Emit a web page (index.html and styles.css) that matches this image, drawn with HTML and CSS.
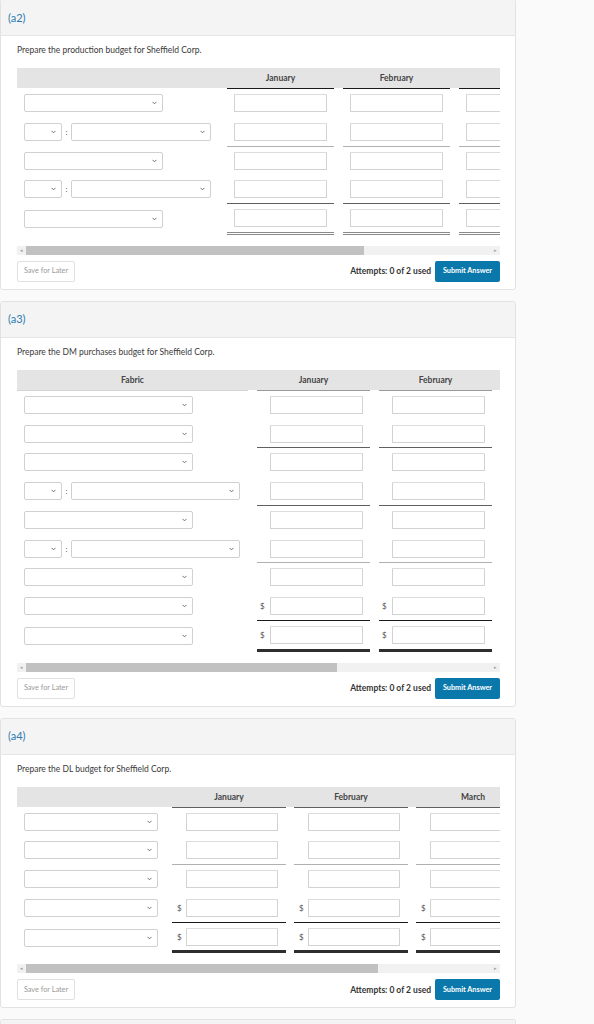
FILE: index.html
```html
<!DOCTYPE html>
<html lang="en">
<head>
<meta charset="utf-8">
<title>Budgets</title>
<link rel="stylesheet" href="styles.css">
</head>
<body>
<div class="page">

  <!-- (a2) -->
  <section class="card">
    <header class="card-head">(a2)</header>
    <div class="card-body">
      <p class="prompt">Prepare the production budget for Sheffield Corp.</p>
      <div class="viewport">
        <div class="row t-a2 hrow">
          <div class="hc"></div>
          <div class="hc ln-black">January</div>
          <div class="hc ln-black">February</div>
          <div class="hc ln-black"></div>
        </div>
        <div class="row t-a2">
          <div class="lc"><div class="sel w139"><svg class="chev" viewBox="0 0 6 4"><path d="M0.6 0.6L3 3L5.4 0.6"/></svg></div></div>
          <div class="mc"><input class="inp" type="text"></div>
          <div class="mc"><input class="inp" type="text"></div>
          <div class="mc"><input class="inp" type="text"></div>
        </div>
        <div class="row t-a2">
          <div class="lc"><div class="sel w38"><svg class="chev" viewBox="0 0 6 4"><path d="M0.6 0.6L3 3L5.4 0.6"/></svg></div><span class="colon">:</span><div class="sel w140"><svg class="chev" viewBox="0 0 6 4"><path d="M0.6 0.6L3 3L5.4 0.6"/></svg></div></div>
          <div class="mc ln-gray"><input class="inp" type="text"></div>
          <div class="mc ln-gray"><input class="inp" type="text"></div>
          <div class="mc ln-gray"><input class="inp" type="text"></div>
        </div>
        <div class="row t-a2">
          <div class="lc"><div class="sel w139"><svg class="chev" viewBox="0 0 6 4"><path d="M0.6 0.6L3 3L5.4 0.6"/></svg></div></div>
          <div class="mc"><input class="inp" type="text"></div>
          <div class="mc"><input class="inp" type="text"></div>
          <div class="mc"><input class="inp" type="text"></div>
        </div>
        <div class="row t-a2">
          <div class="lc"><div class="sel w38"><svg class="chev" viewBox="0 0 6 4"><path d="M0.6 0.6L3 3L5.4 0.6"/></svg></div><span class="colon">:</span><div class="sel w140"><svg class="chev" viewBox="0 0 6 4"><path d="M0.6 0.6L3 3L5.4 0.6"/></svg></div></div>
          <div class="mc ln-dark"><input class="inp" type="text"></div>
          <div class="mc ln-dark"><input class="inp" type="text"></div>
          <div class="mc ln-dark"><input class="inp" type="text"></div>
        </div>
        <div class="row t-a2">
          <div class="lc"><div class="sel w139"><svg class="chev" viewBox="0 0 6 4"><path d="M0.6 0.6L3 3L5.4 0.6"/></svg></div></div>
          <div class="mc ln-total-gray"><input class="inp" type="text"></div>
          <div class="mc ln-total-gray"><input class="inp" type="text"></div>
          <div class="mc ln-total-gray"><input class="inp" type="text"></div>
        </div>
      </div>
      <div class="hscroll">
        <span class="arr">&#9666;</span>
        <div class="track"><div class="thumb" style="width:338px"></div></div>
        <span class="arr">&#9656;</span>
      </div>
      <div class="actions">
        <button class="btn-save" type="button">Save for Later</button>
        <div class="submit-group">
          <span class="attempts">Attempts: 0 of 2 used</span>
          <button class="btn-submit" type="button">Submit Answer</button>
        </div>
      </div>
    </div>
  </section>

  <!-- (a3) -->
  <section class="card">
    <header class="card-head">(a3)</header>
    <div class="card-body">
      <p class="prompt">Prepare the DM purchases budget for Sheffield Corp.</p>
      <div class="viewport">
        <div class="row t-a3 hrow">
          <div class="hc ln-light">Fabric</div>
          <div class="hc ln-mid">January</div>
          <div class="hc ln-mid">February</div>
        </div>
        <div class="row t-a3">
          <div class="lc"><div class="sel w169"><svg class="chev" viewBox="0 0 6 4"><path d="M0.6 0.6L3 3L5.4 0.6"/></svg></div></div>
          <div class="mc"><span class="cur"></span><input class="inp" type="text"></div>
          <div class="mc"><span class="cur"></span><input class="inp" type="text"></div>
        </div>
        <div class="row t-a3">
          <div class="lc"><div class="sel w169"><svg class="chev" viewBox="0 0 6 4"><path d="M0.6 0.6L3 3L5.4 0.6"/></svg></div></div>
          <div class="mc ln-dark"><span class="cur"></span><input class="inp" type="text"></div>
          <div class="mc ln-dark"><span class="cur"></span><input class="inp" type="text"></div>
        </div>
        <div class="row t-a3">
          <div class="lc"><div class="sel w169"><svg class="chev" viewBox="0 0 6 4"><path d="M0.6 0.6L3 3L5.4 0.6"/></svg></div></div>
          <div class="mc"><span class="cur"></span><input class="inp" type="text"></div>
          <div class="mc"><span class="cur"></span><input class="inp" type="text"></div>
        </div>
        <div class="row t-a3">
          <div class="lc"><div class="sel w38"><svg class="chev" viewBox="0 0 6 4"><path d="M0.6 0.6L3 3L5.4 0.6"/></svg></div><span class="colon">:</span><div class="sel w169"><svg class="chev" viewBox="0 0 6 4"><path d="M0.6 0.6L3 3L5.4 0.6"/></svg></div></div>
          <div class="mc ln-dark"><span class="cur"></span><input class="inp" type="text"></div>
          <div class="mc ln-dark"><span class="cur"></span><input class="inp" type="text"></div>
        </div>
        <div class="row t-a3">
          <div class="lc"><div class="sel w169"><svg class="chev" viewBox="0 0 6 4"><path d="M0.6 0.6L3 3L5.4 0.6"/></svg></div></div>
          <div class="mc"><span class="cur"></span><input class="inp" type="text"></div>
          <div class="mc"><span class="cur"></span><input class="inp" type="text"></div>
        </div>
        <div class="row t-a3">
          <div class="lc"><div class="sel w38"><svg class="chev" viewBox="0 0 6 4"><path d="M0.6 0.6L3 3L5.4 0.6"/></svg></div><span class="colon">:</span><div class="sel w169"><svg class="chev" viewBox="0 0 6 4"><path d="M0.6 0.6L3 3L5.4 0.6"/></svg></div></div>
          <div class="mc ln-gray"><span class="cur"></span><input class="inp" type="text"></div>
          <div class="mc ln-gray"><span class="cur"></span><input class="inp" type="text"></div>
        </div>
        <div class="row t-a3">
          <div class="lc"><div class="sel w169"><svg class="chev" viewBox="0 0 6 4"><path d="M0.6 0.6L3 3L5.4 0.6"/></svg></div></div>
          <div class="mc"><span class="cur"></span><input class="inp" type="text"></div>
          <div class="mc"><span class="cur"></span><input class="inp" type="text"></div>
        </div>
        <div class="row t-a3">
          <div class="lc"><div class="sel w169"><svg class="chev" viewBox="0 0 6 4"><path d="M0.6 0.6L3 3L5.4 0.6"/></svg></div></div>
          <div class="mc ln-black"><span class="cur">$</span><input class="inp" type="text"></div>
          <div class="mc ln-black"><span class="cur">$</span><input class="inp" type="text"></div>
        </div>
        <div class="row t-a3">
          <div class="lc"><div class="sel w169"><svg class="chev" viewBox="0 0 6 4"><path d="M0.6 0.6L3 3L5.4 0.6"/></svg></div></div>
          <div class="mc ln-total"><span class="cur">$</span><input class="inp" type="text"></div>
          <div class="mc ln-total"><span class="cur">$</span><input class="inp" type="text"></div>
        </div>
      </div>
      <div class="hscroll">
        <span class="arr">&#9666;</span>
        <div class="track"><div class="thumb" style="width:311px"></div></div>
        <span class="arr">&#9656;</span>
      </div>
      <div class="actions">
        <button class="btn-save" type="button">Save for Later</button>
        <div class="submit-group">
          <span class="attempts">Attempts: 0 of 2 used</span>
          <button class="btn-submit" type="button">Submit Answer</button>
        </div>
      </div>
    </div>
  </section>

  <!-- (a4) -->
  <section class="card">
    <header class="card-head">(a4)</header>
    <div class="card-body">
      <p class="prompt">Prepare the DL budget for Sheffield Corp.</p>
      <div class="viewport">
        <div class="row t-a4 hrow">
          <div class="hc"></div>
          <div class="hc ln-dark">January</div>
          <div class="hc ln-dark">February</div>
          <div class="hc ln-dark">March</div>
        </div>
        <div class="row t-a4">
          <div class="lc"><div class="sel w134"><svg class="chev" viewBox="0 0 6 4"><path d="M0.6 0.6L3 3L5.4 0.6"/></svg></div></div>
          <div class="mc"><span class="cur"></span><input class="inp" type="text"></div>
          <div class="mc"><span class="cur"></span><input class="inp" type="text"></div>
          <div class="mc"><span class="cur"></span><input class="inp" type="text"></div>
        </div>
        <div class="row t-a4">
          <div class="lc"><div class="sel w134"><svg class="chev" viewBox="0 0 6 4"><path d="M0.6 0.6L3 3L5.4 0.6"/></svg></div></div>
          <div class="mc ln-gray"><span class="cur"></span><input class="inp" type="text"></div>
          <div class="mc ln-gray"><span class="cur"></span><input class="inp" type="text"></div>
          <div class="mc ln-gray"><span class="cur"></span><input class="inp" type="text"></div>
        </div>
        <div class="row t-a4">
          <div class="lc"><div class="sel w134"><svg class="chev" viewBox="0 0 6 4"><path d="M0.6 0.6L3 3L5.4 0.6"/></svg></div></div>
          <div class="mc"><span class="cur"></span><input class="inp" type="text"></div>
          <div class="mc"><span class="cur"></span><input class="inp" type="text"></div>
          <div class="mc"><span class="cur"></span><input class="inp" type="text"></div>
        </div>
        <div class="row t-a4">
          <div class="lc"><div class="sel w134"><svg class="chev" viewBox="0 0 6 4"><path d="M0.6 0.6L3 3L5.4 0.6"/></svg></div></div>
          <div class="mc ln-black"><span class="cur">$</span><input class="inp" type="text"></div>
          <div class="mc ln-black"><span class="cur">$</span><input class="inp" type="text"></div>
          <div class="mc ln-black"><span class="cur">$</span><input class="inp" type="text"></div>
        </div>
        <div class="row t-a4">
          <div class="lc"><div class="sel w134"><svg class="chev" viewBox="0 0 6 4"><path d="M0.6 0.6L3 3L5.4 0.6"/></svg></div></div>
          <div class="mc ln-total"><span class="cur">$</span><input class="inp" type="text"></div>
          <div class="mc ln-total"><span class="cur">$</span><input class="inp" type="text"></div>
          <div class="mc ln-total"><span class="cur">$</span><input class="inp" type="text"></div>
        </div>
      </div>
      <div class="hscroll">
        <span class="arr">&#9666;</span>
        <div class="track"><div class="thumb" style="width:352px"></div></div>
        <span class="arr">&#9656;</span>
      </div>
      <div class="actions">
        <button class="btn-save" type="button">Save for Later</button>
        <div class="submit-group">
          <span class="attempts">Attempts: 0 of 2 used</span>
          <button class="btn-submit" type="button">Submit Answer</button>
        </div>
      </div>
    </div>
  </section>

  <section class="card card-stub">
    <header class="card-head"></header>
  </section>

</div>
</body>
</html>
```

FILE: styles.css
```css
* { box-sizing: border-box; }

html, body {
  margin: 0;
  padding: 0;
  background: #fafafa;
  font-family: Lato, "Open Sans", "Liberation Sans", sans-serif;
  color: #333;
}

.page {
  display: flex;
  flex-direction: column;
  gap: 11px;
  width: 516px;
  margin-top: -1px;
}

.card {
  background: #fff;
  border: 1px solid #e2e2e2;
  border-radius: 3px;
  overflow: hidden;
}

.card-head {
  height: 36px;
  background: #f4f4f4;
  border-bottom: 1px solid #e6e6e6;
  padding-left: 7px;
  display: flex;
  align-items: center;
  font-size: 11px;
  line-height: 14px;
  color: #2b7bb0;
}

.card-body {
  padding: 9px 15px 7px 16px;
}

.prompt {
  margin: 0 0 13px;
  font-size: 8.5px;
  line-height: 10px;
  color: #3a3a3a;
}

.viewport {
  width: 483px;
  overflow: hidden;
}

.row {
  display: grid;
  column-gap: 9px;
}

.t-a2 { grid-template-columns: 201px 107px 107px 107px; }
.t-a3 { grid-template-columns: 231px 113px 113px; }
.t-a4 { grid-template-columns: 147px 114px 114px 114px; column-gap: 8px; }

.hrow {
  background: linear-gradient(#e4e4e4 0 20px, #fff 20px);
}

.hc {
  height: 21px;
  border-bottom: 1px solid transparent;
  display: flex;
  align-items: center;
  justify-content: center;
  font-size: 8.5px;
  line-height: 10px;
  font-weight: 700;
  color: #444;
  white-space: nowrap;
}

.lc {
  display: flex;
  align-items: center;
  padding: 5px 0 4.75px 7px;
  border-bottom: 1px solid transparent;
}

.mc {
  display: flex;
  align-items: center;
  justify-content: flex-end;
  gap: 5px;
  padding: 5px 7px 4.75px 0;
  border-bottom: 1px solid transparent;
}

.t-a4 .mc { padding-right: 8px; gap: 4px; }

.ln-black { border-bottom-color: #1a1a1a; }
.ln-dark  { border-bottom-color: #606060; }
.ln-mid   { border-bottom-color: #9a9a9a; }
.ln-gray  { border-bottom-color: #b0b0b0; }
.ln-light { border-bottom-color: #d4d4d4; }
.ln-total { border-bottom: 3px solid #2e2e2e; }
.ln-total-gray { border-bottom: 3px double #8a8a8a; }

.cur {
  font-size: 8px;
  line-height: 10px;
  color: #555;
  width: 5px;
  text-align: left;
}

.inp {
  display: block;
  width: 93px;
  height: 18px;
  margin: 0;
  padding: 0;
  border: 1px solid #d2d2d2;
  border-top-color: #dcdcdc;
  border-radius: 1px;
  background: #fff;
}

.t-a4 .inp { width: 92px; }

.sel {
  height: 18px;
  border: 1px solid #d0d0d0;
  border-radius: 2px;
  background: #fff;
  display: flex;
  align-items: center;
  justify-content: flex-end;
  padding-right: 5px;
  flex: none;
}

.w38  { width: 38px; }
.w134 { width: 134px; }
.w139 { width: 139px; }
.w140 { width: 140px; }
.w169 { width: 169px; }

.chev {
  width: 5px;
  height: 4px;
  fill: none;
  stroke: #555;
  stroke-width: 1;
}

.colon {
  font-size: 8px;
  color: #555;
  width: 9px;
  text-align: center;
}

.hscroll {
  margin-top: 11px;
  height: 9px;
  width: 483px;
  background: #f1f1f1;
  display: flex;
  align-items: center;
}

.arr {
  width: 9px;
  font-size: 5px;
  color: #a0a0a0;
  text-align: center;
  line-height: 9px;
  flex: none;
}

.track {
  flex: 1;
  height: 9px;
}

.thumb {
  height: 9px;
  background: #c1c1c1;
}

.actions {
  margin-top: 6px;
  display: flex;
  justify-content: space-between;
  align-items: center;
  width: 483px;
  height: 21px;
}

.btn-save {
  height: 21px;
  width: 58px;
  padding: 0;
  border: 1px solid #e0e0e0;
  border-radius: 2px;
  background: #fff;
  font-family: inherit;
  font-size: 7.3px;
  line-height: 10px;
  color: #9a9a9a;
}

.submit-group {
  display: flex;
  align-items: center;
  gap: 4px;
}

.attempts {
  font-size: 8.5px;
  line-height: 10px;
  font-weight: 700;
  color: #333;
}

.btn-submit {
  height: 21px;
  width: 65px;
  padding: 0;
  border: none;
  border-radius: 2px;
  background: #0a78ab;
  font-family: inherit;
  font-size: 7.3px;
  line-height: 10px;
  font-weight: 700;
  color: #fff;
}

.card-stub .card-head {
  height: 30px;
  border-bottom: none;
}
```
